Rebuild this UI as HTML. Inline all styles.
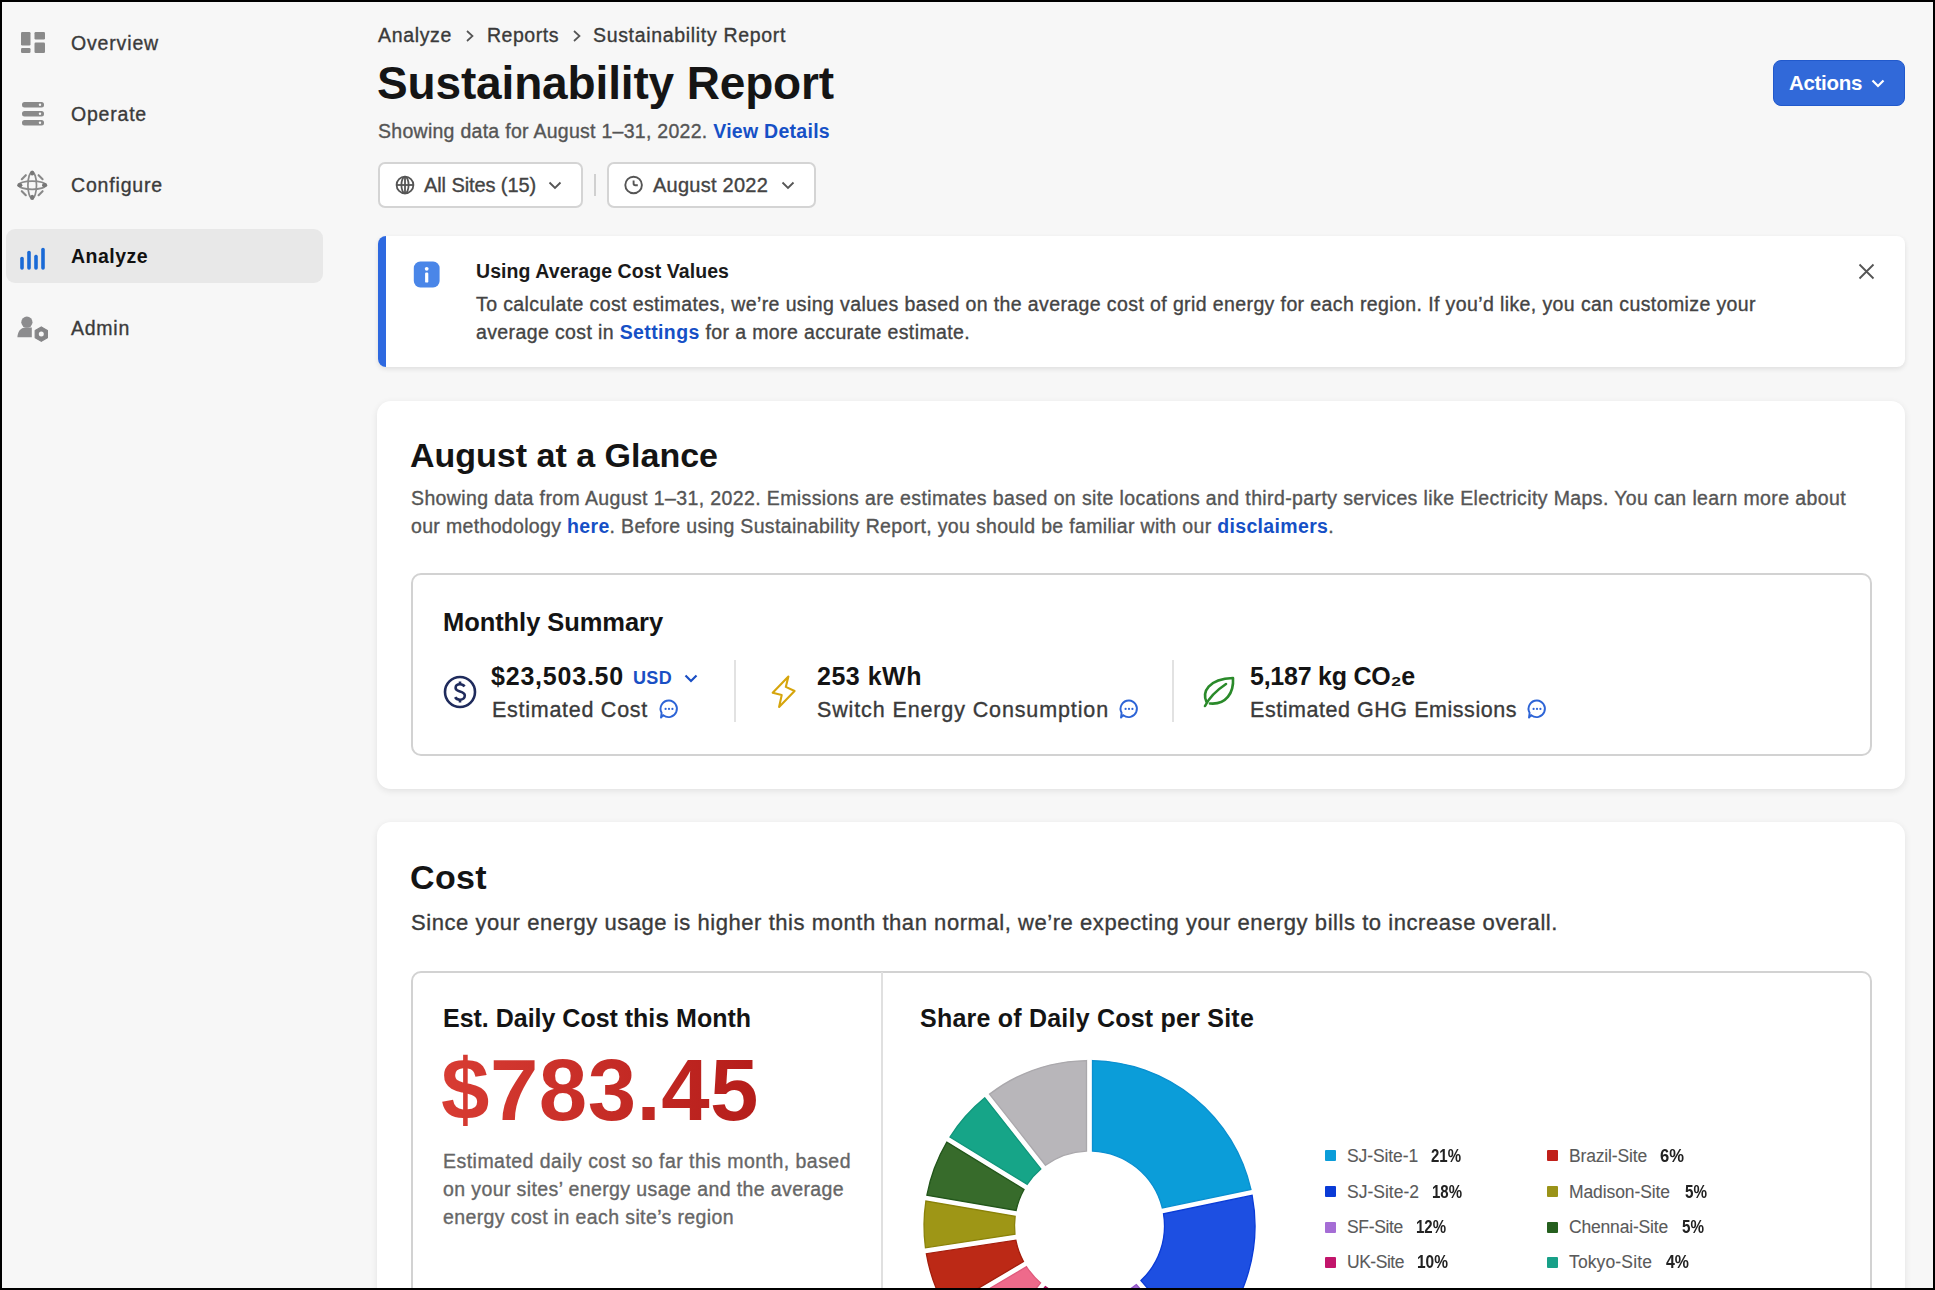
<!DOCTYPE html>
<html><head><meta charset="utf-8"><title>Sustainability Report</title><style>
*{box-sizing:border-box;margin:0;padding:0}
html,body{width:1935px;height:1290px;overflow:hidden;background:#f7f7f7}
body{font-family:"Liberation Sans",sans-serif;position:relative}
.t{position:absolute;white-space:nowrap;line-height:1;-webkit-text-stroke:0.35px currentColor}
.t span[style*="font-weight:700"]{-webkit-text-stroke:0}
</style></head><body>
<div style="position:absolute;left:6px;top:229px;width:317px;height:54px;background:#e8e8e8;border-radius:9px"></div>
<div class="t" style="left:71px;top:34.00px;font-size:19.5px;color:#3b3b3b;letter-spacing:0.842px;">Overview</div>
<div class="t" style="left:71px;top:105.00px;font-size:19.5px;color:#3b3b3b;letter-spacing:0.792px;">Operate</div>
<div class="t" style="left:71px;top:176.00px;font-size:19.5px;color:#3b3b3b;letter-spacing:0.828px;">Configure</div>
<div class="t" style="left:71px;top:247.00px;font-size:19.5px;color:#111;letter-spacing:0.472px;"><span style="font-weight:700;">Analyze</span></div>
<div class="t" style="left:71px;top:319.00px;font-size:19.5px;color:#3b3b3b;letter-spacing:0.746px;">Admin</div>
<svg style="position:absolute;left:20px;top:31px;overflow:visible;" width="26" height="23" viewBox="0 0 26 23">
<rect x="1" y="1" width="9.5" height="13.5" rx="1.2" fill="#8a8a8a"/>
<rect x="14.5" y="1" width="10.5" height="7.5" rx="1.2" fill="#8a8a8a"/>
<rect x="1" y="17" width="9.5" height="5" rx="1.2" fill="#8a8a8a"/>
<rect x="14.5" y="11.5" width="10.5" height="10.5" rx="1.2" fill="#8a8a8a"/>
</svg>
<svg style="position:absolute;left:21px;top:100px;overflow:visible;" width="24" height="28" viewBox="0 0 24 28">
<rect x="1" y="2" width="22" height="5.5" rx="2.5" fill="#8a8a8a"/>
<rect x="1" y="11" width="22" height="5.5" rx="2.5" fill="#8a8a8a"/>
<rect x="1" y="20" width="22" height="5.5" rx="2.5" fill="#8a8a8a"/>
<circle cx="19" cy="4.75" r="1.2" fill="#f7f7f7"/>
<circle cx="19" cy="13.75" r="1.2" fill="#f7f7f7"/>
<circle cx="19" cy="22.75" r="1.2" fill="#f7f7f7"/>
</svg>
<svg style="position:absolute;left:10px;top:165px;overflow:visible;" width="45" height="40" viewBox="0 0 45 40">
<g fill="none" stroke="#8a8a8a" stroke-width="1.7">
<ellipse cx="22.2" cy="20.2" rx="4.3" ry="13.2"/>
<ellipse cx="22.2" cy="20.2" rx="13.6" ry="4.1"/>
</g>
<g fill="#777">
<ellipse cx="22.2" cy="8" rx="2.1" ry="2.6"/><ellipse cx="22.2" cy="32.4" rx="2.1" ry="2.6"/>
<ellipse cx="9.8" cy="20.2" rx="2.6" ry="2.1"/><ellipse cx="34.6" cy="20.2" rx="2.6" ry="2.1"/>
</g>
<g fill="none" stroke="#888" stroke-width="2.1" stroke-linecap="round">
<path d="M11.8 14.2 L15.8 10.2"/><path d="M28.6 10.2 L32.6 14.2"/>
<path d="M11.8 26.2 L15.8 30.2"/><path d="M28.6 30.2 L32.6 26.2"/>
</g>
</svg>
<svg style="position:absolute;left:18px;top:246px;overflow:visible;" width="30" height="26" viewBox="0 0 30 26">
<g stroke="#1a6ad6" stroke-width="3.6" stroke-linecap="round">
<line x1="4" y1="12.5" x2="4" y2="22"/>
<line x1="11" y1="6.5" x2="11" y2="22"/>
<line x1="18" y1="10.5" x2="18" y2="22"/>
<line x1="25" y1="3.5" x2="25" y2="22"/>
</g>
</svg>
<svg style="position:absolute;left:10px;top:305px;overflow:visible;" width="45" height="40" viewBox="0 0 45 40">
<circle cx="16.9" cy="17.2" r="5.6" fill="#8c8c8e"/>
<path d="M7.4 32.3 C7.6 26.5 10.5 22.6 15.5 22.4 L21.8 22.4 L21.8 32.3 Z" fill="#8c8c8e"/>
<path d="M31.3 21.9 L37.4 25.5 L37.4 32.7 L31.3 36.3 L25.2 32.7 L25.2 25.5 Z" fill="#858587" stroke="#858587" stroke-width="1.2" stroke-linejoin="round"/>
<circle cx="31.3" cy="29.1" r="2.5" fill="#f7f7f7"/>
</svg>
<div class="t" style="left:378px;top:26.00px;font-size:19.5px;color:#3a3a3a;letter-spacing:0.661px;">Analyze</div>
<div class="t" style="left:487px;top:26.00px;font-size:19.5px;color:#3a3a3a;letter-spacing:0.532px;">Reports</div>
<div class="t" style="left:593px;top:26.00px;font-size:19.5px;color:#3a3a3a;letter-spacing:0.674px;">Sustainability Report</div>
<svg style="position:absolute;left:465px;top:30px;overflow:visible;" width="10" height="12" viewBox="0 0 10 12"><path d="M2 1 L7.5 6 L2 11" fill="none" stroke="#555" stroke-width="1.7"/></svg>
<svg style="position:absolute;left:572px;top:30px;overflow:visible;" width="10" height="12" viewBox="0 0 10 12"><path d="M2 1 L7.5 6 L2 11" fill="none" stroke="#555" stroke-width="1.7"/></svg>
<div class="t" style="left:377px;top:60.00px;font-size:46px;color:#151515;letter-spacing:-0.146px;"><span style="font-weight:700;">Sustainability Report</span></div>
<div class="t" style="left:378px;top:122.00px;font-size:19.5px;color:#555;letter-spacing:0.277px;">Showing data for August 1–31, 2022. <span style="font-weight:700;color:#1650c6;">View Details</span></div>
<div style="position:absolute;left:378px;top:162px;width:205px;height:46px;background:#fff;border:2px solid #d4d4d4;border-radius:7px"></div>
<div style="position:absolute;left:607px;top:162px;width:209px;height:46px;background:#fff;border:2px solid #d4d4d4;border-radius:7px"></div>
<div style="position:absolute;left:594px;top:174px;width:2px;height:22px;background:#d0d0d0"></div>
<svg style="position:absolute;left:395px;top:175px;overflow:visible;" width="20" height="20" viewBox="0 0 20 20"><g fill="none" stroke="#555" stroke-width="1.8">
<circle cx="10" cy="10" r="8.4"/><ellipse cx="10" cy="10" rx="3.6" ry="8.4"/>
<line x1="1.6" y1="10" x2="18.4" y2="10"/><line x1="10" y1="1.6" x2="10" y2="18.4"/></g></svg>
<div class="t" style="left:424px;top:175.00px;font-size:20px;color:#444;letter-spacing:-0.098px;">All Sites (15)</div>
<svg style="position:absolute;left:548px;top:181px;overflow:visible;" width="14" height="9" viewBox="0 0 14 9"><path d="M1.5 1.5 L7 7 L12.5 1.5" fill="none" stroke="#555" stroke-width="1.8"/></svg>
<svg style="position:absolute;left:624px;top:175px;overflow:visible;" width="20" height="20" viewBox="0 0 20 20"><g fill="none" stroke="#555" stroke-width="1.9">
<circle cx="9.6" cy="10" r="8.3"/><path d="M9.6 5.4 V8.6 Q9.6 10.3 11.3 10.3 H13.8"/></g></svg>
<div class="t" style="left:653px;top:175.00px;font-size:20px;color:#444;letter-spacing:0.244px;">August 2022</div>
<svg style="position:absolute;left:781px;top:181px;overflow:visible;" width="14" height="9" viewBox="0 0 14 9"><path d="M1.5 1.5 L7 7 L12.5 1.5" fill="none" stroke="#555" stroke-width="1.8"/></svg>
<div style="position:absolute;left:1773px;top:60px;width:132px;height:46px;background:#3169d9;border:1.5px solid #2159cc;border-radius:8px"></div>
<div class="t" style="left:1789px;top:73.00px;font-size:20.5px;color:#fff;letter-spacing:-0.310px;"><span style="font-weight:700;">Actions</span></div>
<svg style="position:absolute;left:1871px;top:79px;overflow:visible;" width="14" height="9" viewBox="0 0 14 9"><path d="M1.5 1.5 L7 7 L12.5 1.5" fill="none" stroke="#fff" stroke-width="2.2"/></svg>
<div style="position:absolute;left:378px;top:236px;width:1527px;height:131px;background:#fff;border-radius:8px;box-shadow:0 2px 5px rgba(0,0,0,0.10);overflow:hidden"></div>
<div style="position:absolute;left:378px;top:236px;width:8px;height:131px;background:#2e69e0;border-radius:8px 0 0 8px"></div>
<svg style="position:absolute;left:413px;top:261px;overflow:visible;" width="27" height="27" viewBox="0 0 27 27"><rect x="0.8" y="0.5" width="25.8" height="26" rx="6.5" fill="#4a86e8"/>
<circle cx="13.7" cy="7.8" r="1.9" fill="#fff"/><rect x="12.1" y="11.6" width="3.2" height="10" rx="1.2" fill="#fff"/></svg>
<div class="t" style="left:476px;top:262.00px;font-size:19.5px;color:#1a1a1a;letter-spacing:0.077px;"><span style="font-weight:700;">Using Average Cost Values</span></div>
<div class="t" style="left:476px;top:295.00px;font-size:19.5px;color:#444;letter-spacing:0.393px;">To calculate cost estimates, we’re using values based on the average cost of grid energy for each region. If you’d like, you can customize your</div>
<div class="t" style="left:476px;top:323.00px;font-size:19.5px;color:#444;letter-spacing:0.378px;">average cost in <span style="font-weight:700;color:#1650c6;">Settings</span> for a more accurate estimate.</div>
<svg style="position:absolute;left:1858px;top:263px;overflow:visible;" width="17" height="17" viewBox="0 0 17 17"><path d="M1.5 1.5 L15.5 15.5 M15.5 1.5 L1.5 15.5" stroke="#555" stroke-width="1.8"/></svg>
<div style="position:absolute;left:377px;top:401px;width:1528px;height:388px;background:#fff;border-radius:14px;box-shadow:0 2px 7px rgba(0,0,0,0.09)"></div>
<div class="t" style="left:410px;top:438.00px;font-size:34px;color:#141414;letter-spacing:0.002px;"><span style="font-weight:700;">August at a Glance</span></div>
<div class="t" style="left:411px;top:489.00px;font-size:19.5px;color:#555;letter-spacing:0.386px;">Showing data from August 1–31, 2022. Emissions are estimates based on site locations and third-party services like Electricity Maps. You can learn more about</div>
<div class="t" style="left:411px;top:517.00px;font-size:19.5px;color:#555;letter-spacing:0.335px;">our methodology <span style="font-weight:700;color:#1650c6;">here</span>. Before using Sustainability Report, you should be familiar with our <span style="font-weight:700;color:#1650c6;">disclaimers</span>.</div>
<div style="position:absolute;left:411px;top:573px;width:1461px;height:183px;border:2px solid #d2d2d2;border-radius:10px"></div>
<div class="t" style="left:443px;top:610.00px;font-size:25.5px;color:#141414;letter-spacing:-0.069px;"><span style="font-weight:700;">Monthly Summary</span></div>
<svg style="position:absolute;left:443px;top:675px;overflow:visible;" width="34" height="34" viewBox="0 0 34 34"><circle cx="17" cy="17" r="15" fill="none" stroke="#1f2b5c" stroke-width="2.6"/>
<path d="M21.5 11.5 C20.5 9.8 19 9.3 17 9.3 C14 9.3 12.6 11 12.6 13 C12.6 17.5 21.8 15.3 21.8 20.5 C21.8 23 19.8 24.7 17 24.7 C14.6 24.7 13 23.8 12.2 22.2" fill="none" stroke="#1f2b5c" stroke-width="2.6"/>
<line x1="17" y1="6.5" x2="17" y2="9.5" stroke="#1f2b5c" stroke-width="2.6"/><line x1="17" y1="24.5" x2="17" y2="27.5" stroke="#1f2b5c" stroke-width="2.6"/></svg>
<div class="t" style="left:491px;top:664.00px;font-size:25px;color:#141414;letter-spacing:0.788px;"><span style="font-weight:700;">$23,503.50</span></div>
<div class="t" style="left:633px;top:669.00px;font-size:18px;color:#1a4fc4;letter-spacing:0.332px;"><span style="font-weight:700;">USD</span></div>
<svg style="position:absolute;left:684px;top:674px;overflow:visible;" width="14" height="9" viewBox="0 0 14 9"><path d="M1.5 1.5 L7 7 L12.5 1.5" fill="none" stroke="#1a4fc4" stroke-width="2.2"/></svg>
<div class="t" style="left:492px;top:700.00px;font-size:21.5px;color:#3a3a3a;letter-spacing:0.730px;">Estimated Cost</div>
<svg style="position:absolute;left:659px;top:699px;overflow:visible;" width="20" height="20" viewBox="0 0 20 20"><path d="M10 1.5 A8.3 8.3 0 1 1 4.2 16.1 L2 18.5 L2.6 13.8 A8.3 8.3 0 0 1 10 1.5Z" fill="none" stroke="#2d64d6" stroke-width="1.9" stroke-linejoin="round"/>
<circle cx="6.6" cy="9.9" r="1.1" fill="#2d64d6"/><circle cx="10" cy="9.9" r="1.1" fill="#2d64d6"/><circle cx="13.4" cy="9.9" r="1.1" fill="#2d64d6"/></svg>
<div style="position:absolute;left:734px;top:660px;width:2px;height:62px;background:#e2e2e2"></div>
<svg style="position:absolute;left:760px;top:660px;overflow:visible;" width="40" height="55" viewBox="0 0 40 55"><path d="M28.4 16.5 L12.7 32.8 L21.7 35.1 L19.1 47 L34.6 31 L25.8 26.9 Z" fill="none" stroke="#d6a50c" stroke-width="2.1" stroke-linejoin="round"/></svg>
<div class="t" style="left:817px;top:664.00px;font-size:25px;color:#141414;letter-spacing:0.510px;"><span style="font-weight:700;">253 kWh</span></div>
<div class="t" style="left:817px;top:700.00px;font-size:21.5px;color:#3a3a3a;letter-spacing:0.877px;">Switch Energy Consumption</div>
<svg style="position:absolute;left:1119px;top:699px;overflow:visible;" width="20" height="20" viewBox="0 0 20 20"><path d="M10 1.5 A8.3 8.3 0 1 1 4.2 16.1 L2 18.5 L2.6 13.8 A8.3 8.3 0 0 1 10 1.5Z" fill="none" stroke="#2d64d6" stroke-width="1.9" stroke-linejoin="round"/>
<circle cx="6.6" cy="9.9" r="1.1" fill="#2d64d6"/><circle cx="10" cy="9.9" r="1.1" fill="#2d64d6"/><circle cx="13.4" cy="9.9" r="1.1" fill="#2d64d6"/></svg>
<div style="position:absolute;left:1172px;top:660px;width:2px;height:62px;background:#e2e2e2"></div>
<svg style="position:absolute;left:1200px;top:673px;overflow:visible;" width="40" height="38" viewBox="0 0 40 38"><path d="M5 33 C9 25 17 17 26 11 M6.5 29 C2 19 8 6 33 5 C34 20 26 32 10 30.5" fill="none" stroke="#2a8a2a" stroke-width="2.6" stroke-linecap="round" stroke-linejoin="round"/></svg>
<div class="t" style="left:1250px;top:664.00px;font-size:25px;color:#141414;letter-spacing:-0.242px;"><span style="font-weight:700;">5,187 kg CO</span><span style="font-weight:700;">₂</span><span style="font-weight:700;">e</span></div>
<div class="t" style="left:1250px;top:700.00px;font-size:21.5px;color:#3a3a3a;letter-spacing:0.544px;">Estimated GHG Emissions</div>
<svg style="position:absolute;left:1527px;top:699px;overflow:visible;" width="20" height="20" viewBox="0 0 20 20"><path d="M10 1.5 A8.3 8.3 0 1 1 4.2 16.1 L2 18.5 L2.6 13.8 A8.3 8.3 0 0 1 10 1.5Z" fill="none" stroke="#2d64d6" stroke-width="1.9" stroke-linejoin="round"/>
<circle cx="6.6" cy="9.9" r="1.1" fill="#2d64d6"/><circle cx="10" cy="9.9" r="1.1" fill="#2d64d6"/><circle cx="13.4" cy="9.9" r="1.1" fill="#2d64d6"/></svg>
<div style="position:absolute;left:377px;top:822px;width:1528px;height:600px;background:#fff;border-radius:14px;box-shadow:0 2px 7px rgba(0,0,0,0.09)"></div>
<div class="t" style="left:410px;top:860.00px;font-size:34px;color:#141414;letter-spacing:0.362px;"><span style="font-weight:700;">Cost</span></div>
<div class="t" style="left:411px;top:912.00px;font-size:22px;color:#3a3a3a;letter-spacing:0.556px;">Since your energy usage is higher this month than normal, we’re expecting your energy bills to increase overall.</div>
<div style="position:absolute;left:411px;top:971px;width:1461px;height:400px;border:2px solid #d2d2d2;border-radius:10px"></div>
<div style="position:absolute;left:881px;top:972px;width:2px;height:400px;background:#e0e0e0"></div>
<div class="t" style="left:443px;top:1006.00px;font-size:25px;color:#141414;letter-spacing:-0.013px;"><span style="font-weight:700;">Est. Daily Cost this Month</span></div>
<div class="t" style="left:441px;top:1046.00px;font-size:87px;color:#c8302a;letter-spacing:0.502px;background:linear-gradient(90deg,#d83c33,#b51d1a);-webkit-background-clip:text;color:transparent;"><span style="font-weight:700;">$783.45</span></div>
<div class="t" style="left:443px;top:1152.00px;font-size:19.5px;color:#666;letter-spacing:0.468px;">Estimated daily cost so far this month, based</div>
<div class="t" style="left:443px;top:1180.00px;font-size:19.5px;color:#666;letter-spacing:0.393px;">on your sites’ energy usage and the average</div>
<div class="t" style="left:443px;top:1208.00px;font-size:19.5px;color:#666;letter-spacing:0.387px;">energy cost in each site’s region</div>
<div class="t" style="left:920px;top:1006.00px;font-size:25px;color:#141414;letter-spacing:0.219px;"><span style="font-weight:700;">Share of Daily Cost per Site</span></div>
<svg style="position:absolute;left:0;top:0" width="1935" height="1290"><path d="M1092.50 1060.53 A165.5 165.5 0 0 1 1250.93 1189.51 L1162.27 1207.87 A75.0 75.0 0 0 0 1092.50 1151.06 Z" fill="#0b9dd9" stroke="#0a8fd0" stroke-width="1.3"/><path d="M1252.14 1195.38 A165.5 165.5 0 0 1 1200.32 1348.92 L1140.93 1280.59 A75.0 75.0 0 0 0 1163.49 1213.74 Z" fill="#1d4fe2" stroke="#0a3bd6" stroke-width="1.3"/><path d="M1195.80 1352.85 A165.5 165.5 0 0 1 1086.72 1391.48 L1089.88 1301.00 A75.0 75.0 0 0 0 1136.40 1284.53 Z" fill="#a56dd5" stroke="#9256c8" stroke-width="1.3"/><path d="M1080.73 1391.27 A165.5 165.5 0 0 1 989.07 1357.54 L1045.30 1286.59 A75.0 75.0 0 0 0 1083.89 1300.79 Z" fill="#c2156b" stroke="#a80d5a" stroke-width="1.3"/><path d="M984.37 1353.82 A165.5 165.5 0 0 1 948.60 1312.81 L1026.52 1266.73 A75.0 75.0 0 0 0 1040.60 1282.87 Z" fill="#ee6a8b" stroke="#e05a7c" stroke-width="1.3"/><path d="M945.54 1307.65 A165.5 165.5 0 0 1 926.34 1253.71 L1015.85 1240.17 A75.0 75.0 0 0 0 1023.47 1261.57 Z" fill="#bc2916" stroke="#a31d0c" stroke-width="1.3"/><path d="M925.44 1247.78 A165.5 165.5 0 0 1 925.89 1201.08 L1015.13 1216.33 A75.0 75.0 0 0 0 1014.95 1234.24 Z" fill="#9e9616" stroke="#8a8208" stroke-width="1.3"/><path d="M926.90 1195.16 A165.5 165.5 0 0 1 946.84 1142.10 L1024.04 1189.40 A75.0 75.0 0 0 0 1016.14 1210.42 Z" fill="#376b2b" stroke="#22561a" stroke-width="1.3"/><path d="M949.98 1136.98 A165.5 165.5 0 0 1 984.81 1097.82 L1040.80 1168.96 A75.0 75.0 0 0 0 1027.17 1184.29 Z" fill="#16a588" stroke="#0f957a" stroke-width="1.3"/><path d="M989.53 1094.11 A165.5 165.5 0 0 1 1086.50 1060.53 L1086.50 1151.06 A75.0 75.0 0 0 0 1045.51 1165.25 Z" fill="#b8b6ba" stroke="#aaa8ac" stroke-width="1.3"/></svg>
<div style="position:absolute;left:1324.5px;top:1150px;width:11px;height:11px;background:#0b9dd9;border-radius:1px"></div>
<div class="t" style="left:1347px;top:1148.00px;font-size:17.5px;color:#5a5a5a;letter-spacing:-0.107px;-webkit-text-stroke:0.1px currentColor;">SJ-Site-1</div>
<div class="t" style="left:1431px;top:1148.00px;font-size:17.5px;color:#222;transform:scaleX(0.857);transform-origin:0 0;"><span style="font-weight:700;">21%</span></div>
<div style="position:absolute;left:1324.5px;top:1186px;width:11px;height:11px;background:#0a3bd6;border-radius:1px"></div>
<div class="t" style="left:1347px;top:1184.00px;font-size:17.5px;color:#5a5a5a;letter-spacing:0.004px;-webkit-text-stroke:0.1px currentColor;">SJ-Site-2</div>
<div class="t" style="left:1432px;top:1184.00px;font-size:17.5px;color:#222;transform:scaleX(0.857);transform-origin:0 0;"><span style="font-weight:700;">18%</span></div>
<div style="position:absolute;left:1324.5px;top:1221.5px;width:11px;height:11px;background:#a56dd5;border-radius:1px"></div>
<div class="t" style="left:1347px;top:1219.00px;font-size:17.5px;color:#5a5a5a;letter-spacing:-0.335px;-webkit-text-stroke:0.1px currentColor;">SF-Site</div>
<div class="t" style="left:1416px;top:1219.00px;font-size:17.5px;color:#222;transform:scaleX(0.857);transform-origin:0 0;"><span style="font-weight:700;">12%</span></div>
<div style="position:absolute;left:1324.5px;top:1257px;width:11px;height:11px;background:#c2156b;border-radius:1px"></div>
<div class="t" style="left:1347px;top:1254.00px;font-size:17.5px;color:#5a5a5a;letter-spacing:-0.470px;-webkit-text-stroke:0.1px currentColor;">UK-Site</div>
<div class="t" style="left:1417px;top:1254.00px;font-size:17.5px;color:#222;transform:scaleX(0.885);transform-origin:0 0;"><span style="font-weight:700;">10%</span></div>
<div style="position:absolute;left:1546.5px;top:1150px;width:11px;height:11px;background:#c0201a;border-radius:1px"></div>
<div class="t" style="left:1569px;top:1148.00px;font-size:17.5px;color:#5a5a5a;letter-spacing:-0.158px;-webkit-text-stroke:0.1px currentColor;">Brazil-Site</div>
<div class="t" style="left:1660px;top:1148.00px;font-size:17.5px;color:#222;transform:scaleX(0.949);transform-origin:0 0;"><span style="font-weight:700;">6%</span></div>
<div style="position:absolute;left:1546.5px;top:1186px;width:11px;height:11px;background:#9a9318;border-radius:1px"></div>
<div class="t" style="left:1569px;top:1184.00px;font-size:17.5px;color:#5a5a5a;letter-spacing:-0.094px;-webkit-text-stroke:0.1px currentColor;">Madison-Site</div>
<div class="t" style="left:1684.5px;top:1184.00px;font-size:17.5px;color:#222;transform:scaleX(0.870);transform-origin:0 0;"><span style="font-weight:700;">5%</span></div>
<div style="position:absolute;left:1546.5px;top:1221.5px;width:11px;height:11px;background:#255f1e;border-radius:1px"></div>
<div class="t" style="left:1569px;top:1219.00px;font-size:17.5px;color:#5a5a5a;letter-spacing:-0.181px;-webkit-text-stroke:0.1px currentColor;">Chennai-Site</div>
<div class="t" style="left:1681.5px;top:1219.00px;font-size:17.5px;color:#222;transform:scaleX(0.870);transform-origin:0 0;"><span style="font-weight:700;">5%</span></div>
<div style="position:absolute;left:1546.5px;top:1257px;width:11px;height:11px;background:#18a088;border-radius:1px"></div>
<div class="t" style="left:1569px;top:1254.00px;font-size:17.5px;color:#5a5a5a;letter-spacing:0.130px;-webkit-text-stroke:0.1px currentColor;">Tokyo-Site</div>
<div class="t" style="left:1665.5px;top:1254.00px;font-size:17.5px;color:#222;transform:scaleX(0.909);transform-origin:0 0;"><span style="font-weight:700;">4%</span></div>
<div style="position:absolute;left:0;top:0;width:1935px;height:1290px;border:2px solid #000;pointer-events:none"></div>
</body></html>
